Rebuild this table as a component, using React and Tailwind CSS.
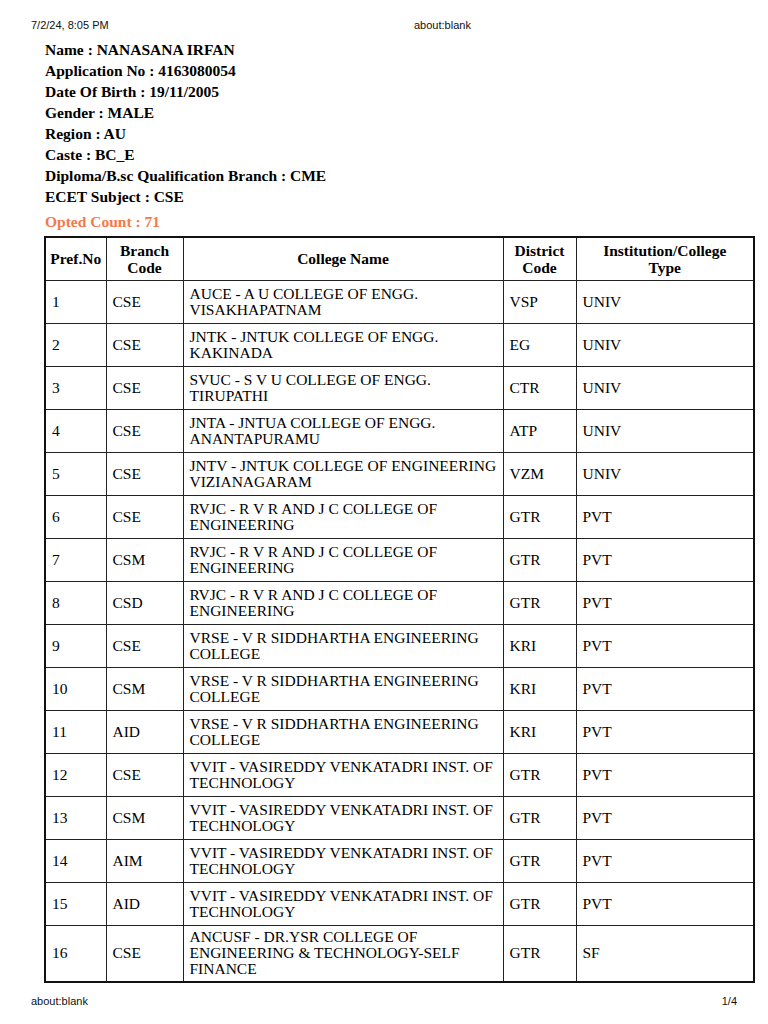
const info = [
  ["Name", "NANASANA IRFAN"],
  ["Application No", "4163080054"],
  ["Date Of Birth", "19/11/2005"],
  ["Gender", "MALE"],
  ["Region", "AU"],
  ["Caste", "BC_E"],
  ["Diploma/B.sc Qualification Branch", "CME"],
  ["ECET Subject", "CSE"],
];

const rows = [
  ["1", "CSE", ["AUCE - A U COLLEGE OF ENGG.", "VISAKHAPATNAM"], "VSP", "UNIV"],
  ["2", "CSE", ["JNTK - JNTUK COLLEGE OF ENGG.", "KAKINADA"], "EG", "UNIV"],
  ["3", "CSE", ["SVUC - S V U COLLEGE OF ENGG.", "TIRUPATHI"], "CTR", "UNIV"],
  ["4", "CSE", ["JNTA - JNTUA COLLEGE OF ENGG.", "ANANTAPURAMU"], "ATP", "UNIV"],
  ["5", "CSE", ["JNTV - JNTUK COLLEGE OF ENGINEERING", "VIZIANAGARAM"], "VZM", "UNIV"],
  ["6", "CSE", ["RVJC - R V R AND J C COLLEGE OF", "ENGINEERING"], "GTR", "PVT"],
  ["7", "CSM", ["RVJC - R V R AND J C COLLEGE OF", "ENGINEERING"], "GTR", "PVT"],
  ["8", "CSD", ["RVJC - R V R AND J C COLLEGE OF", "ENGINEERING"], "GTR", "PVT"],
  ["9", "CSE", ["VRSE - V R SIDDHARTHA ENGINEERING", "COLLEGE"], "KRI", "PVT"],
  ["10", "CSM", ["VRSE - V R SIDDHARTHA ENGINEERING", "COLLEGE"], "KRI", "PVT"],
  ["11", "AID", ["VRSE - V R SIDDHARTHA ENGINEERING", "COLLEGE"], "KRI", "PVT"],
  ["12", "CSE", ["VVIT - VASIREDDY VENKATADRI INST. OF", "TECHNOLOGY"], "GTR", "PVT"],
  ["13", "CSM", ["VVIT - VASIREDDY VENKATADRI INST. OF", "TECHNOLOGY"], "GTR", "PVT"],
  ["14", "AIM", ["VVIT - VASIREDDY VENKATADRI INST. OF", "TECHNOLOGY"], "GTR", "PVT"],
  ["15", "AID", ["VVIT - VASIREDDY VENKATADRI INST. OF", "TECHNOLOGY"], "GTR", "PVT"],
  ["16", "CSE", ["ANCUSF - DR.YSR COLLEGE OF", "ENGINEERING & TECHNOLOGY-SELF", "FINANCE"], "GTR", "SF"],
];

const th = "border border-[#222] font-bold text-center align-middle px-1 leading-[17px]";
const td = "border border-[#222] align-middle px-[6px] leading-[16px]";

export default function App() {
  return (
    <div className="w-[768px] h-[1024px] bg-white text-black relative font-['Liberation_Serif',serif]">
      {/* print header */}
      <div className="flex h-[48px] pt-[19px] px-[31px] text-[11px] leading-[12px] font-['Liberation_Sans',Arial,sans-serif] text-[#111]">
        <span className="w-[383px]">7/2/24, 8:05 PM</span>
        <span>about:blank</span>
      </div>

      <div className="pl-[45px] -mt-[9px]">
        {info.map(([k, v]) => (
          <div key={k} className="font-bold text-[15.5px] leading-[21px]">
            {k} : {v}
          </div>
        ))}
        <div className="font-bold text-[15.5px] leading-[21px] mt-[4px] text-[#f5794a]">
          Opted Count : 71
        </div>
      </div>

      <div className="pl-[44px] mt-[4px]">
        <table className="border-collapse border-2 border-[#111] w-[709px] text-[15.5px] table-fixed">
          <colgroup>
            <col className="w-[61px]" />
            <col className="w-[77px]" />
            <col className="w-[320px]" />
            <col className="w-[73px]" />
            <col className="w-[178px]" />
          </colgroup>
          <thead>
            <tr className="h-[43px]">
              <th className={th}>Pref.No</th>
              <th className={th}>Branch<br />Code</th>
              <th className={th}>College Name</th>
              <th className={th}>District<br />Code</th>
              <th className={th}>Institution/College<br />Type</th>
            </tr>
          </thead>
          <tbody>
            {rows.map(([no, br, name, dist, type]) => (
              <tr key={no} className={name.length > 2 ? "h-[57px]" : "h-[43px]"}>
                <td className={td}>{no}</td>
                <td className={td}>{br}</td>
                <td className={td}>
                  {name.map((l, i) => (
                    <div key={i}>{l}</div>
                  ))}
                </td>
                <td className={td}>{dist}</td>
                <td className={td}>{type}</td>
              </tr>
            ))}
          </tbody>
        </table>
      </div>

      {/* print footer */}
      <div className="absolute left-0 right-0 top-[995px] flex justify-between px-[31px] text-[11px] leading-[12px] font-['Liberation_Sans',Arial,sans-serif] text-[#111]">
        <span>about:blank</span>
        <span>1/4</span>
      </div>
    </div>
  );
}
